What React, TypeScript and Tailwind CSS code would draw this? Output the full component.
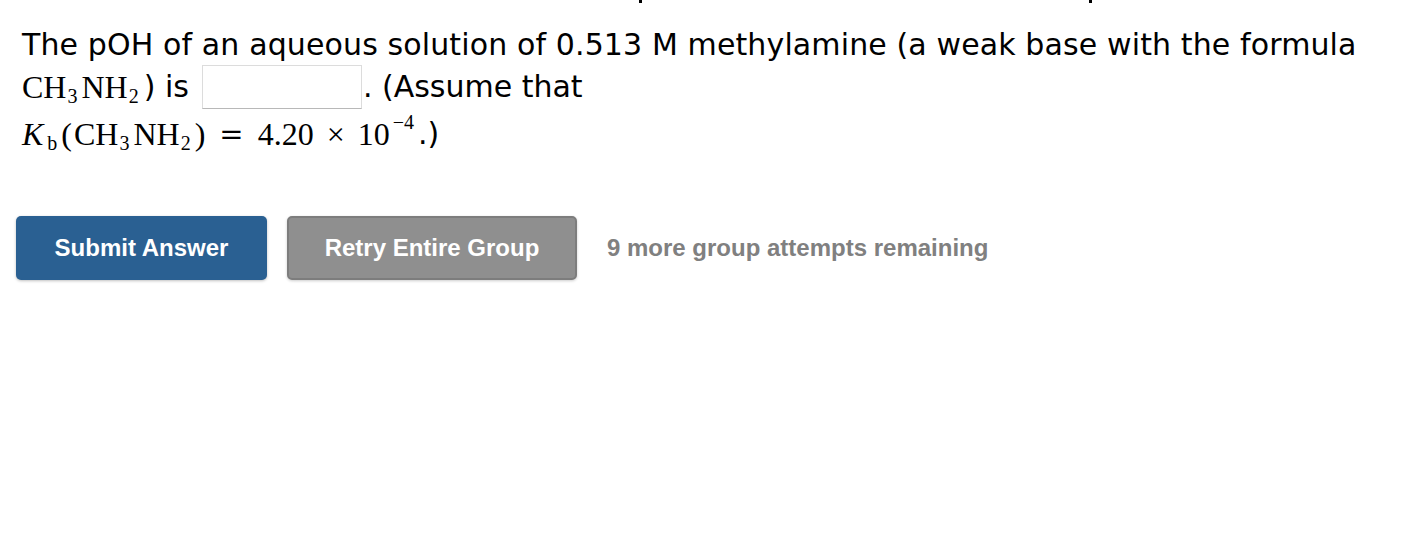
import React from "react";

const serif = { fontFamily: '"Liberation Serif", "Times New Roman", serif' };

function Sub({ children }: { children: React.ReactNode }) {
  return (
    <sub style={serif} className="text-[20px] leading-none mx-[1px]">
      {children}
    </sub>
  );
}

function Chem() {
  return (
    <span style={serif} className="text-[32px]">
      CH<Sub>3</Sub>
      <span className="ml-[3px]">NH</span>
      <Sub>2</Sub>
    </span>
  );
}

export default function App() {
  return (
    <div className="w-[1414px] h-[560px] bg-white overflow-hidden">
      {/* descenders from the line above */}
      <div className="flex h-[3px]">
        <div className="ml-[639px] w-[3px] h-[3px] bg-black" />
        <div className="ml-[447px] w-[3px] h-[3px] bg-black" />
      </div>

      <div className="pl-[22px] pt-[21px] text-black text-[30px] leading-[42px] font-['DejaVu_Sans',sans-serif]">
        <div className="h-[42px] whitespace-nowrap tracking-[0.12px]">
          The pOH of an aqueous solution of 0.513 M methylamine (a weak base with the formula
        </div>
        <div className="flex items-center h-[42px]">
          <Chem />
          <span className="ml-[4px]">) is</span>
          <span className="ml-[13px] w-[160px] h-[44px] shrink-0 border border-[#dcdcdc] border-b-[#b8b8b8] bg-white" />
          <span className="ml-[1px]">. (Assume that</span>
        </div>
        <div className="flex items-center h-[52px]">
          <span style={serif} className="text-[32px]">
            <span className="italic pr-[3px]">K</span>
            <Sub>b</Sub>
          </span>
          <span style={serif} className="text-[32px] ml-[3px] mr-[2px]">(</span>
          <Chem />
          <span style={serif} className="text-[32px] ml-[3px]">)</span>
          <span className="font-['DejaVu_Serif',serif] text-[29px] mx-[14px]">=</span>
          <span style={serif} className="text-[32px]">4.20</span>
          <span style={serif} className="text-[32px] mx-[13px]">×</span>
          <span style={serif} className="text-[32px]">
            10
            <sup className="text-[20px] leading-none ml-[3px] align-[6px]">−4</sup>
          </span>
          <span className="ml-[4px]">.)</span>
        </div>
      </div>

      <div className="flex items-center mt-[56px] pl-[16px] font-['Liberation_Sans',Arial,sans-serif] font-bold">
        <button className="w-[251px] h-[64px] rounded-[5px] bg-[#2a6092] text-white text-[24px] shadow-[0_1px_3px_rgba(0,0,0,0.25)]">
          Submit Answer
        </button>
        <button className="ml-[20px] w-[290px] h-[64px] rounded-[5px] bg-[#8f8f8f] border-2 border-[#7d7d7d] text-white text-[24px] shadow-[0_1px_3px_rgba(0,0,0,0.2)]">
          Retry Entire Group
        </button>
        <span className="ml-[30px] text-[24px] text-[#808080]">9 more group attempts remaining</span>
      </div>
    </div>
  );
}
